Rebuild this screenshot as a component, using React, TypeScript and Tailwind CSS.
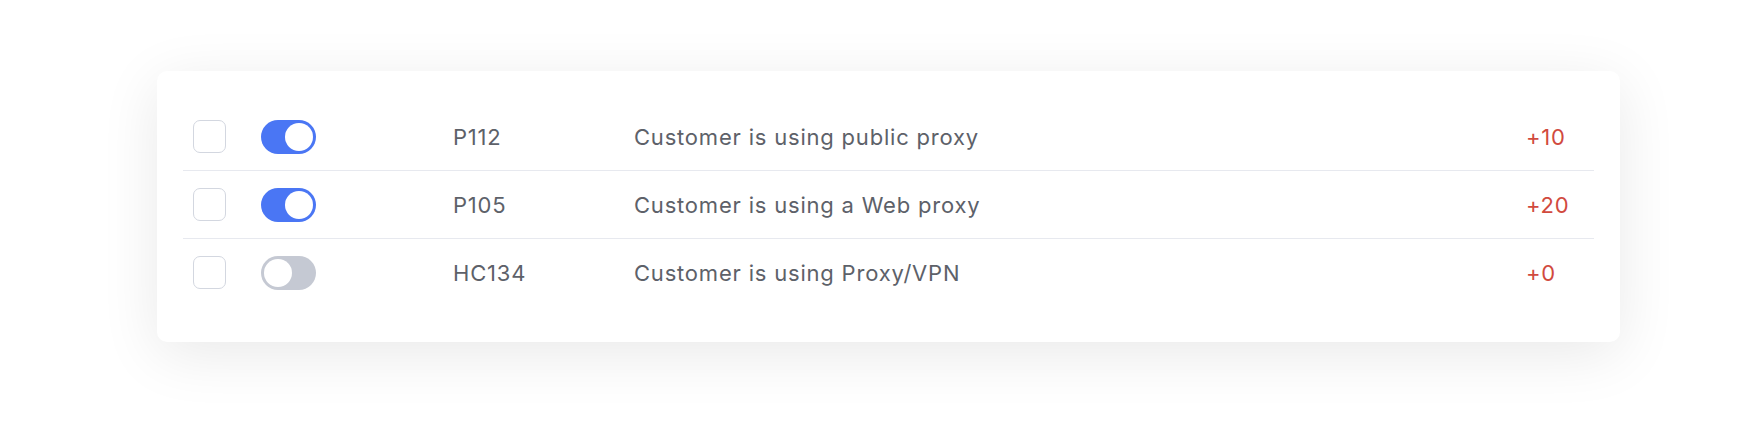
import React from "react";

type Rule = {
  code: string;
  description: string;
  score: string;
  enabled: boolean;
};

const rules: Rule[] = [
  { code: "P112", description: "Customer is using public proxy", score: "+10", enabled: true },
  { code: "P105", description: "Customer is using a Web proxy", score: "+20", enabled: true },
  { code: "HC134", description: "Customer is using Proxy/VPN", score: "+0", enabled: false },
];

const Toggle = ({ on }: { on: boolean }) => (
  <div
    className={
      on
        ? "flex h-[34px] w-[55px] items-center justify-end rounded-full bg-[#4a76f4] p-[3px]"
        : "flex h-[34px] w-[55px] items-center justify-start rounded-full bg-[#c5c9d3] p-[3px]"
    }
  >
    <div className="h-[28px] w-[28px] rounded-full bg-white" />
  </div>
);

const App = () => {
  return (
    <div className="h-[448px] w-full bg-white pl-[157px] pt-[71px] font-['Inter','Liberation_Sans',sans-serif]">
      <div className="w-[1463px] rounded-[10px] bg-white px-[26px] pb-[36px] pt-[32px] shadow-[0_12px_60px_rgba(0,0,0,0.09)]">
        {rules.map((rule, i) => (
          <div
            key={rule.code}
            className={
              i < rules.length - 1
                ? "flex h-[68px] items-center border-b border-[#e7e9ef] pl-[10px] text-[22px] tracking-[0.8px]"
                : "flex h-[67px] items-center pl-[10px] text-[22px] tracking-[0.8px]"
            }
          >
            <div className="h-[33px] w-[33px] rounded-[7px] border-[1.5px] border-[#d3d7e0] bg-white" />
            <div className="ml-[35px]">
              <Toggle on={rule.enabled} />
            </div>
            <div className="ml-[137px] w-[181px] pt-[2px] text-[#5d6169]">{rule.code}</div>
            <div className="flex-1 pt-[2px] text-[#5d6169]">{rule.description}</div>
            <div className="w-[68px] pt-[2px] text-[#d14a3e]">{rule.score}</div>
          </div>
        ))}
      </div>
    </div>
  );
};

export default App;
